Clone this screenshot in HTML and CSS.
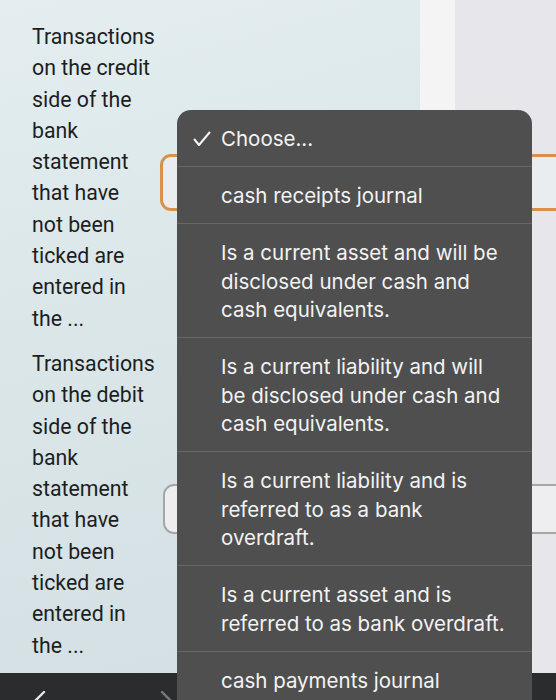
FILE: index.html
```html
<!DOCTYPE html>
<html lang="en">
<head>
<meta charset="utf-8">
<title>Bank reconciliation question</title>
<link rel="stylesheet" href="styles.css">
</head>
<body>
<div class="screen">
  <main class="content">
    <section class="question">
      <p class="q-text">Transactions<br>on the credit<br>side of the<br>bank<br>statement<br>that have<br>not been<br>ticked are<br>entered in<br>the ...</p>
      <div class="q-select q-select--focus"></div>
    </section>
    <section class="question">
      <p class="q-text">Transactions<br>on the debit<br>side of the<br>bank<br>statement<br>that have<br>not been<br>ticked are<br>entered in<br>the ...</p>
      <div class="q-select q-select--idle"></div>
    </section>
  </main>
  <footer class="toolbar">
    <svg class="chev chev--back" width="14" height="10" viewBox="0 0 14 10"><path d="M12 1 L3 10" fill="none" stroke="#e8e8e8" stroke-width="2.4" stroke-linecap="round"/></svg>
    <svg class="chev chev--fwd" width="14" height="10" viewBox="0 0 14 10"><path d="M2 1 L11 10" fill="none" stroke="#7a7a7c" stroke-width="2.4" stroke-linecap="round"/></svg>
  </footer>
  <ul class="picker">
    <li class="picker-item picker-item--checked">
      <svg class="check" width="18" height="16" viewBox="0 0 18 16"><path d="M1.5 8.5 L6 14 L16.5 1.5" fill="none" stroke="#f4f4f4" stroke-width="2" stroke-linecap="round" stroke-linejoin="round"/></svg>
      Choose...
    </li>
    <li class="picker-item">cash receipts journal</li>
    <li class="picker-item">Is a current asset and will be<br>disclosed under cash and<br>cash equivalents.</li>
    <li class="picker-item">Is a current liability and will<br>be disclosed under cash and<br>cash equivalents.</li>
    <li class="picker-item">Is a current liability and is<br>referred to as a bank<br>overdraft.</li>
    <li class="picker-item">Is a current asset and is<br>referred to as bank overdraft.</li>
    <li class="picker-item">cash payments journal</li>
  </ul>
</div>
</body>
</html>
```
FILE: styles.css
```css
* { box-sizing: border-box; }
html, body { margin: 0; padding: 0; }
body { width: 556px; height: 700px; overflow: hidden; background: #e6e6ea; }

.screen {
  position: relative;
  width: 556px;
  height: 700px;
  overflow: hidden;
  display: flex;
  flex-direction: column;
  font-family: Roboto, "Liberation Sans", sans-serif;
}

.content {
  flex: 1;
  display: flex;
  flex-direction: column;
  gap: 14px;
  padding-top: 21px;
  background:
    linear-gradient(165deg, #e4eef0 0%, #dbe6e9 45%, #d3dfe2 100%) 0 0 / 420px 100% no-repeat,
    linear-gradient(to right, #f4f4f5 0 455px, #e7e7eb 455px 100%);
}

.question {
  display: flex;
  align-items: center;
}

.q-text {
  margin: 0;
  flex: 0 0 160px;
  padding-left: 32px;
  font-size: 21.3px;
  line-height: 31.3px;
  color: #1c1e1f;
  white-space: nowrap;
}

.q-select {
  flex: 1;
  margin-right: -30px;
  margin-top: 10px;
  border-radius: 11px;
}

.q-select--focus {
  height: 57px;
  margin-top: 11px;
  border: 3px solid #d8914a;
  background: #eaedf0;
}

.q-select--idle {
  height: 50px;
  margin-left: 3px;
  border: 2px solid #a6a6a9;
  background: #eeeef1;
}

.toolbar {
  flex: 0 0 27px;
  position: relative;
  background: #2b2c2e;
}

.chev { position: absolute; top: 18px; }
.chev--back { left: 32px; }
.chev--fwd { left: 160px; }

.picker {
  position: absolute;
  top: 110px;
  left: 177px;
  width: 355px;
  height: 640px;
  margin: 0;
  padding: 0;
  list-style: none;
  background: #4f4f4f;
  border-radius: 14px;
  font-family: Inter, "Open Sans", sans-serif;
  font-size: 20.5px;
  line-height: 28.5px;
  color: #f3f3f3;
}

.picker-item {
  position: relative;
  padding: 15.25px 16px 12.25px 44px;
  white-space: nowrap;
}

.picker-item + .picker-item {
  border-top: 1px solid #666666;
}

.check {
  position: absolute;
  left: 16px;
  top: 21px;
}
```
